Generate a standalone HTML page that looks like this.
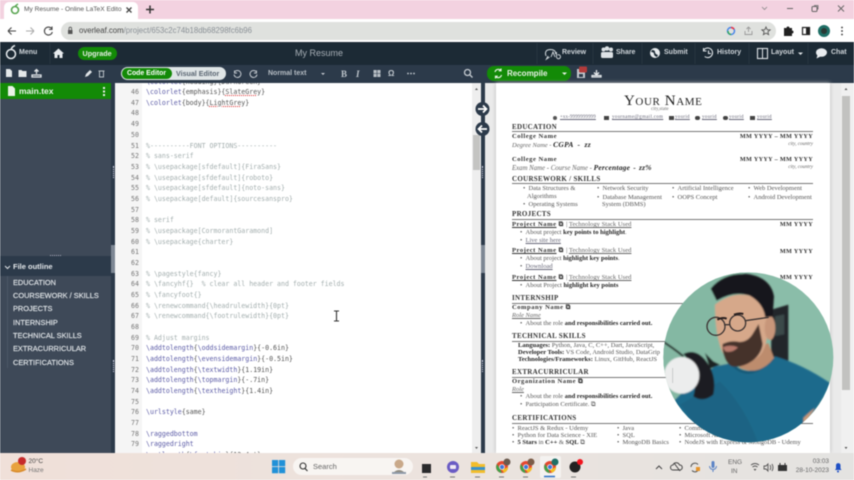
<!DOCTYPE html>
<html><head><meta charset="utf-8"><title>My Resume - Online LaTeX Editor</title>
<style>
html,body{margin:0;padding:0;width:854px;height:480px;overflow:hidden;background:#fff}
#r{position:relative;width:854px;height:480px;overflow:hidden;font-family:"Liberation Sans",sans-serif;filter:blur(.4px)}
.b{position:absolute}
.t{position:absolute;line-height:0;white-space:nowrap}
.h{color:#cfd5da;font-weight:bold;font-size:7px}
.n{position:absolute;left:115px;width:24px;text-align:right;line-height:0;font:6.6px/0 "DejaVu Sans Mono","Liberation Mono",monospace;color:#777}
.c{position:absolute;left:146px;line-height:0;white-space:pre;font:6.6px/0 "DejaVu Sans Mono","Liberation Mono",monospace;color:#555}
.g{color:#a3aeae}.p{color:#5a5aa6}.u{text-decoration:underline dotted #d33}
.o{position:absolute;left:13px;line-height:0;font-size:7.4px;color:#e3e7ea;white-space:nowrap;-webkit-text-stroke:.15px #e3e7ea}
.s{position:absolute;line-height:0;white-space:nowrap;font-family:"Liberation Serif",serif;font-size:6.5px;color:#555}
.k{font-weight:bold;color:#222}
.sec{position:absolute;left:512px;line-height:0;white-space:nowrap;font:bold 7px/0 "Liberation Serif",serif;color:#333;letter-spacing:.3px}
.rl{position:absolute;left:512px;width:301px;height:1px;background:#777}
.nm{position:absolute;left:512px;line-height:0;white-space:nowrap;font:bold 6.6px/0 "Liberation Serif",serif;color:#333;letter-spacing:.5px}
.dt{position:absolute;right:41px;line-height:0;white-space:nowrap;font:bold 6.2px/0 "Liberation Serif",serif;color:#333;letter-spacing:.32px}
.ct{position:absolute;right:41px;line-height:0;white-space:nowrap;font:italic 5px/0 "Liberation Serif",serif;color:#666}
.i{font-style:italic;color:#666}
.ul{text-decoration:underline;color:#667}
.q{position:absolute;top:118px;line-height:0;white-space:nowrap;font:5px/0 "Liberation Serif",serif;color:#667;text-decoration:underline}
.w{position:absolute;top:116px;width:5px;height:4px;background:#444}
.tx{font-weight:normal;color:#666;letter-spacing:0}
</style></head><body><div id="r">

<!-- browser chrome -->
<div class="b" style="left:0;top:0;width:854px;height:19px;background:#f3d2e0"></div>
<div class="b" style="left:4px;top:2px;width:134px;height:17px;background:#fff;border-radius:5px 5px 0 0"></div>
<div class="b" style="left:0;top:19px;width:854px;height:23px;background:#fff"></div>
<div class="b" style="left:61px;top:22px;width:715px;height:18px;background:#dfe1de;border-radius:9px"></div>
<div class="t" style="left:24px;top:9.5px;font-size:6.6px;color:#555">My Resume - Online LaTeX Edito</div>
<div class="t" style="left:79px;top:31px;font-size:7.8px;color:#8a9096"><span style="color:#444">overleaf.com</span>/project/653c2c74b18db68298fc6b96</div>
<svg class="b" style="left:0;top:0" width="854" height="42" viewBox="0 0 854 42" fill="none">
<circle cx="15" cy="10" r="3.500" stroke="#5aa552" stroke-width="1.600"/><path d="M15 7q1-2 3-3" stroke="#5aa552" stroke-width="1.400"/>
<path d="M126.500 7.500l5 5m0-5l-5 5" stroke="#444" stroke-width="1.300"/>
<path d="M146 9.500h8M150 5.500v8" stroke="#333" stroke-width="1.500"/>
<path d="M8 31h8M8 31l3.500-3.500M8 31l3.500 3.500" stroke="#444" stroke-width="1.100"/>
<path d="M26 31h8M34 31l-3.500-3.500M34 31l-3.500 3.500" stroke="#aaa" stroke-width="1"/>
<path d="M51.500 28.500a4 4 0 1 0 .8 3.500M52 26.500v3h-3" stroke="#444" stroke-width="1.100"/>
<rect x="68" y="30" width="4.500" height="4" fill="#555"/><path d="M69 30v-1.500a1.300 1.300 0 0 1 2.600 0V30" stroke="#555" stroke-width=".8"/>
<circle cx="731" cy="31" r="3.500" stroke="#4a86e8" stroke-width="1.500"/><path d="M731 27.500a3.500 3.500 0 0 1 3 1.700" stroke="#e34" stroke-width="1.500"/><path d="M728 31a3.500 3.500 0 0 0 3 3.500" stroke="#3a5" stroke-width="1.500"/>
<path d="M745 31v3.500h7V31M748.500 32v-5M746.500 29l2-2 2 2" stroke="#999" stroke-width=".9"/>
<path d="M766 27l1.200 2.700 2.900.2-2.200 1.900.7 2.800-2.600-1.500-2.600 1.500.7-2.800-2.200-1.900 2.900-.2z" stroke="#555" stroke-width=".9"/>
<path d="M784 28h2.500a1.500 1.500 0 0 1 3 0h2.500v2.500a1.500 1.500 0 0 1 0 3V36h-8z" fill="#222"/>
<rect x="802.500" y="27.500" width="7" height="7" stroke="#222" stroke-width="1.200"/><rect x="806" y="27.500" width="3.500" height="7" fill="#222"/>
<circle cx="824" cy="31" r="6" fill="#1f6f66"/><circle cx="824" cy="31" r="3" fill="#2b3a35"/>
<circle cx="842" cy="27.500" r=".9" fill="#333"/><circle cx="842" cy="31" r=".9" fill="#333"/><circle cx="842" cy="34.500" r=".9" fill="#333"/>
<path d="M762 7l2.500 2.500L767 7" stroke="#888" stroke-width=".8"/>
<path d="M787 8.500h6" stroke="#666" stroke-width="1"/>
<rect x="812" y="6.500" width="5" height="5" rx="1" stroke="#666"/><path d="M814 5.500h4v4" stroke="#666" stroke-width=".8"/>
<path d="M838 5.500l6 6m0-6l-6 6" stroke="#666" stroke-width=".9"/>
</svg>

<!-- overleaf header -->
<div class="b" style="left:0;top:42px;width:854px;height:23px;background:#1c2a35"></div>
<div class="b" style="left:0;top:65px;width:854px;height:18px;background:#2c3a4a"></div>
<div class="t h" style="left:19px;top:53px">Menu</div>
<div class="b" style="left:78px;top:47px;width:39px;height:13px;border-radius:7px;background:#138a07"></div>
<div class="t" style="left:82.500px;top:53.500px;font-size:7.200px;font-weight:bold;color:#e6efe4">Upgrade</div>
<div class="t" style="left:295px;top:53px;font-size:9px;color:#a6aeb5">My Resume</div>
<div class="t h" style="left:562px;top:53px">Review</div>
<div class="t h" style="left:616px;top:53px">Share</div>
<div class="t h" style="left:664px;top:53px">Submit</div>
<div class="t h" style="left:717px;top:53px">History</div>
<div class="t h" style="left:771px;top:53px">Layout</div>
<div class="t h" style="left:831px;top:53px">Chat</div>
<svg class="b" style="left:0;top:42px" width="854" height="41" viewBox="0 42 854 41" fill="none">
<circle cx="11" cy="54" r="4.500" stroke="#e8ecef" stroke-width="1.500"/><path d="M11 49.500q1-3 4-4" stroke="#e8ecef" stroke-width="1.500"/>
<path d="M53 53.500l5.500-5 5.500 5h-1.500V58h-3v-3h-2v3h-3v-4.500z" fill="#e8ecef"/>
<path d="M546 56q-2-6 4-6.500 6 0 5.500 4.500M548 56l-1.500 3 3-2" stroke="#d6dce0"/><path d="M551 57l2-5 2 5M556.500 52v5a2 2 0 1 0 1-2" stroke="#d6dce0" stroke-width=".9"/>
<circle cx="603.500" cy="49.500" r="2" fill="#dde2e6"/><circle cx="607" cy="48.500" r="2.300" fill="#dde2e6"/><circle cx="611" cy="49.500" r="2" fill="#dde2e6"/><rect x="601" y="52" width="12" height="6" rx="1.500" fill="#dde2e6"/>
<circle cx="655" cy="53" r="5" fill="#e6eaed"/><path d="M652 50q3 0 3 2t3 3l-1 2q-3-1-3-3t-3-2z" fill="#1c2a35"/>
<path d="M703.500 50.500a4.800 4.800 0 1 1 1.200 6M703.500 48v3h3M708.500 50.500v3h2.500" stroke="#dde2e6" stroke-width="1.100"/>
<rect x="757.500" y="48.500" width="10" height="10" stroke="#dde2e6" stroke-width="1.100"/><path d="M762.500 48.500v10" stroke="#dde2e6"/>
<path d="M798 52.500h5l-2.500 2.500z" fill="#dde2e6"/>
<ellipse cx="821.500" cy="52.500" rx="5.500" ry="4.300" fill="#e8ecef"/><path d="M817.500 55l-1 3.500 4-2z" fill="#e8ecef"/>
<path d="M537 43v21M593 43v21M642 43v21M695 43v21M749 43v21M808 43v21M50 43v21" stroke="#273540"/>
<!-- toolbar -->
<path d="M6 69h4l2 2v6H6z" fill="#e4e8ea"/><path d="M18.500 70h3l1 1h4v6h-8z" fill="#e4e8ea"/><path d="M32 77h9v-2h-9zM36.500 74v-4M34.500 71.500l2-2 2 2" stroke="#e4e8ea" stroke-width="1.300"/>
<path d="M85 77l1-3 4-4 2 2-4 4z" fill="#dfe3e6"/><path d="M98.500 71h6M99.500 71.500v5.500h4v-5.500" stroke="#b9c0c6" stroke-width="1"/>
<path d="M235 71.500a3.500 3.500 0 1 1-1 3M234.500 70.500v2.500h2.500" stroke="#c4cad0" stroke-width="1"/>
<path d="M256 71.500a3.500 3.500 0 1 0 1 3M256.500 70.500v2.500H254" stroke="#c4cad0" stroke-width="1"/>
<path d="M321 73h4l-2 2z" fill="#c4cad0"/>
<rect x="373.500" y="70" width="7" height="7" fill="#b9c0c6"/><path d="M373.500 73.500h7M377 70v7" stroke="#2c3a4a" stroke-width=".6"/>
<circle cx="411" cy="73.500" r=".9" fill="#c4cad0"/><circle cx="408" cy="73.500" r=".9" fill="#c4cad0"/><circle cx="414" cy="73.500" r=".9" fill="#c4cad0"/>
<circle cx="467.500" cy="72.500" r="3" stroke="#c4cad0" stroke-width="1.300"/><path d="M470 75l2.500 2.500" stroke="#c4cad0" stroke-width="1.300"/>
</svg>
<div class="t" style="left:341px;top:73.500px;font:bold 9px/0 'Liberation Serif',serif;color:#bfc6cc">B</div>
<div class="t" style="left:356px;top:73.500px;font:italic bold 9px/0 'Liberation Serif',serif;color:#bfc6cc">I</div>
<div class="t" style="left:388px;top:73.500px;font-size:8px;color:#bfc6cc;font-weight:bold">Ω</div>
<div class="t" style="left:268px;top:73.500px;font-size:7px;font-weight:bold;color:#b6bdc4">Normal text</div>
<div class="b" style="left:121px;top:67px;width:105px;height:13px;border-radius:7px;background:#dfe5e6"></div>
<div class="b" style="left:122px;top:68px;width:50px;height:11px;border-radius:6px;background:#138a07"></div>
<div class="t" style="left:127px;top:73.500px;font-size:6.900px;font-weight:bold;color:#fff">Code Editor</div>
<div class="t" style="left:176px;top:73.500px;font-size:7.100px;font-weight:bold;color:#5a6672">Visual Editor</div>
<div class="b" style="left:487px;top:66px;width:84px;height:15px;border-radius:7px;background:#138a07"></div>
<div class="t" style="left:507px;top:73.500px;font-size:8px;font-weight:bold;color:#e8f2e6">Recompile</div>
<svg class="b" style="left:487px;top:65px" width="125" height="18" viewBox="487 65 125 18" fill="none">
<path d="M495 72a3.500 3.500 0 0 1 6-1.500M501.500 75a3.500 3.500 0 0 1-6 1.500M501 68.500v2.300h-2.300M495.500 78.500v-2.300h2.300" stroke="#e8f2e6" stroke-width="1.200"/>
<path d="M562 72.500h5l-2.500 2.500z" fill="#e8f2e6"/>
<rect x="577" y="69" width="8" height="9" fill="#c2c8ce"/><rect x="579" y="74" width="4" height="3" fill="#2c3a4a"/><rect x="579" y="66.500" width="8" height="6" rx="1" fill="#b23b3b"/>
<path d="M592 77h9v-1.500h-9zM596.500 75v-5M594 72.500l2.500 2.500 2.500-2.500" stroke="#e4e8ea" stroke-width="1.300"/>
</svg>

<!-- sidebar -->
<div class="b" style="left:0;top:83px;width:111px;height:370px;background:#3e4958"></div>
<div class="b" style="left:0;top:83px;width:111px;height:16px;background:#138a07"></div>
<svg class="b" style="left:7px;top:85px" width="9" height="12" viewBox="0 0 9 12"><path d="M1 1h4.500L8 3.500V11H1z" fill="#e8f2e6"/></svg>
<div class="t" style="left:19px;top:91px;font-size:8.500px;font-weight:bold;color:#eef4ec">main.tex</div>
<div class="b" style="left:103px;top:87px;width:2px;height:2px;background:#eee;box-shadow:0 3.500px #eee,0 7px #eee"></div>
<div class="b" style="left:0;top:256px;width:111px;height:20px;background:#2c3a4a"></div>
<div class="t" style="left:13px;top:267px;font-size:7.500px;font-weight:bold;color:#e3e7ea">File outline</div>
<svg class="b" style="left:4px;top:265px" width="7" height="5"><path d="M1 1l2.500 2.500L6 1" stroke="#dde2e6" fill="none"/></svg>
<div class="b" style="left:50px;top:255px;width:11px;height:1px;border-top:1px dotted #aab"></div>
<div class="b" style="left:7px;top:276px;width:1px;height:92px;background:#4b5666"></div>
<div class="o" style="top:282.500px">EDUCATION</div>
<div class="o" style="top:296px">COURSEWORK / SKILLS</div>
<div class="o" style="top:309px">PROJECTS</div>
<div class="o" style="top:322.500px">INTERNSHIP</div>
<div class="o" style="top:336px">TECHNICAL SKILLS</div>
<div class="o" style="top:349px">EXTRACURRICULAR</div>
<div class="o" style="top:362.500px">CERTIFICATIONS</div>
<div class="b" style="left:111px;top:83px;width:4px;height:370px;background:#2c3a4a"></div>
<div class="b" style="left:111px;top:245px;width:4px;height:28px;background:#7d8794"></div>
<div class="b" style="left:112.500px;top:166px;width:1px;height:12px;border-left:1px dotted #dde"></div>
<div class="b" style="left:112.500px;top:360px;width:1px;height:12px;border-left:1px dotted #dde"></div>

<!-- editor -->
<div class="b" style="left:115px;top:83px;width:357px;height:370px;background:#fff;overflow:hidden"></div>
<div class="b" style="left:115px;top:83px;width:27px;height:370px;background:#f5f5f5"></div>
<div class="b" style="left:142px;top:83px;width:330px;height:370px;overflow:hidden">
<div class="c" style="left:4px;top:-1.500px"><span class="p">\colorlet</span>{heading}{DarkGreen}</div>
<div class="c" style="left:4px;top:371.500px"><span class="p">\setlength</span>{<span class="p">\footskip</span>}{13.4pt}</div>
</div>
<div class="n" style="top:92px">46</div><div class="c" style="top:92px"><span class="p">\colorlet</span>{emphasis}{<span class="u">SlateGrey</span>}</div>
<div class="n" style="top:103px">47</div><div class="c" style="top:103px"><span class="p">\colorlet</span>{body}{<span class="u">LightGrey</span>}</div>
<div class="n" style="top:113px">48</div>
<div class="n" style="top:124px">49</div>
<div class="n" style="top:135px">50</div>
<div class="n" style="top:145.500px">51</div><div class="c g" style="top:145.500px">%----------FONT OPTIONS----------</div>
<div class="n" style="top:156px">52</div><div class="c g" style="top:156px">% sans-serif</div>
<div class="n" style="top:167px">53</div><div class="c g" style="top:167px">% \usepackage[sfdefault]{FiraSans}</div>
<div class="n" style="top:177.500px">54</div><div class="c g" style="top:177.500px">% \usepackage[sfdefault]{roboto}</div>
<div class="n" style="top:188px">55</div><div class="c g" style="top:188px">% \usepackage[sfdefault]{noto-sans}</div>
<div class="n" style="top:199px">56</div><div class="c g" style="top:199px">% \usepackage[default]{sourcesanspro}</div>
<div class="n" style="top:209.500px">57</div>
<div class="n" style="top:220px">58</div><div class="c g" style="top:220px">% serif</div>
<div class="n" style="top:231px">59</div><div class="c g" style="top:231px">% \usepackage[CormorantGaramond]</div>
<div class="n" style="top:241.500px">60</div><div class="c g" style="top:241.500px">% \usepackage{charter}</div>
<div class="n" style="top:252px">61</div>
<div class="n" style="top:263px">62</div>
<div class="n" style="top:273.500px">63</div><div class="c g" style="top:273.500px">% \pagestyle{fancy}</div>
<div class="n" style="top:284px">64</div><div class="c g" style="top:284px">% \fancyhf{}  % clear all header and footer fields</div>
<div class="n" style="top:295px">65</div><div class="c g" style="top:295px">% \fancyfoot{}</div>
<div class="n" style="top:305.500px">66</div><div class="c g" style="top:305.500px">% \renewcommand{\headrulewidth}{0pt}</div>
<div class="n" style="top:316px">67</div><div class="c g" style="top:316px">% \renewcommand{\footrulewidth}{0pt}</div>
<div class="n" style="top:327px">68</div>
<div class="n" style="top:337.500px">69</div><div class="c g" style="top:337.500px">% Adjust margins</div>
<div class="n" style="top:348px">70</div><div class="c" style="top:348px"><span class="p">\addtolength</span>{<span class="p">\oddsidemargin</span>}{-0.6in}</div>
<div class="n" style="top:359px">71</div><div class="c" style="top:359px"><span class="p">\addtolength</span>{<span class="p">\evensidemargin</span>}{-0.5in}</div>
<div class="n" style="top:369.500px">72</div><div class="c" style="top:369.500px"><span class="p">\addtolength</span>{<span class="p">\textwidth</span>}{1.19in}</div>
<div class="n" style="top:380px">73</div><div class="c" style="top:380px"><span class="p">\addtolength</span>{<span class="p">\topmargin</span>}{-.7in}</div>
<div class="n" style="top:391px">74</div><div class="c" style="top:391px"><span class="p">\addtolength</span>{<span class="p">\textheight</span>}{1.4in}</div>
<div class="n" style="top:401.500px">75</div>
<div class="n" style="top:412px">76</div><div class="c" style="top:412px"><span class="p">\urlstyle</span>{same}</div>
<div class="n" style="top:423px">77</div>
<div class="n" style="top:433.500px">78</div><div class="c p" style="top:433.500px">\raggedbottom</div>
<div class="n" style="top:444px">79</div><div class="c p" style="top:444px">\raggedright</div>
<svg class="b" style="left:332px;top:310px" width="9" height="12"><path d="M2 1h5M2 11h5M4.500 1v10" stroke="#333" stroke-width="1.100" fill="none"/></svg>

<!-- editor scrollbar / splitter -->
<div class="b" style="left:472px;top:83px;width:9px;height:370px;background:#eee"></div>
<div class="b" style="left:473px;top:135px;width:7px;height:35px;background:#c4c4c2"></div>
<div class="b" style="left:481px;top:83px;width:4px;height:370px;background:#2c3a4a"></div>
<div class="b" style="left:481px;top:245px;width:4px;height:28px;background:#7d8794"></div>
<div class="b" style="left:482px;top:166px;width:1px;height:12px;border-left:1px dotted #dde"></div>
<div class="b" style="left:482px;top:360px;width:1px;height:12px;border-left:1px dotted #dde"></div>

<!-- pdf viewer -->
<div class="b" style="left:485px;top:83px;width:369px;height:370px;background:#eaeaea"></div>
<div class="b" style="left:496px;top:83px;width:334px;height:370px;background:#fff;box-shadow:0 0 4px #bbb"></div>
<div class="b" style="left:841px;top:83px;width:13px;height:370px;background:#f0f0f0"></div>
<div class="b" style="left:842px;top:96px;width:8px;height:294px;background:#c2c2c0"></div>
<svg class="b" style="left:472px;top:83px" width="382" height="370" viewBox="472 83 382 370">
<path d="M475 90l1.500-2 1.500 2zM475 447l1.500 2 1.500-2zM844.500 90l1.500-2 1.500 2zM844.500 447l1.500 2 1.500-2z" fill="#555"/>
<circle cx="482.500" cy="109" r="7" fill="#2c3a4a"/><path d="M478 109h8M483 105.500l3.500 3.500-3.500 3.500" stroke="#fff" stroke-width="1.700" fill="none"/>
<circle cx="482.500" cy="129" r="7" fill="#2c3a4a"/><path d="M487 129h-8M482 125.500l-3.500 3.500 3.500 3.500" stroke="#fff" stroke-width="1.700" fill="none"/>
</svg>

<!-- resume -->
<div class="t" style="left:624px;top:100.500px;font:15px/0 'Liberation Serif',serif;font-variant:small-caps;color:#222;letter-spacing:.6px">Your Name</div>
<div class="s" style="left:651px;top:110px;font-size:5px;color:#777">city,state</div>
<div class="w" style="left:553px;background:#555;width:4px;border-radius:2px"></div><div class="q" style="left:560px;letter-spacing:.1px">+xx-9999999999</div>
<div class="w" style="left:604px"></div><div class="q" style="left:612px;letter-spacing:.3px">yourname@gmail.com</div>
<div class="w" style="left:669px"></div><div class="q" style="left:675px;letter-spacing:.3px">yourid</div>
<div class="w" style="left:695px;border-radius:2px"></div><div class="q" style="left:702px;letter-spacing:.3px">yourid</div>
<div class="w" style="left:723px;border-radius:2px"></div><div class="q" style="left:729px;letter-spacing:.3px">yourid</div>
<div class="w" style="left:750px"></div><div class="q" style="left:757px;letter-spacing:.3px">yourid</div>

<div class="sec" style="top:127px">EDUCATION</div><div class="rl" style="top:131px"></div>
<div class="nm" style="top:137px">College Name</div><div class="dt" style="top:137px">MM YYYY – MM YYYY</div>
<div class="s" style="left:512px;top:144.500px"><span class="i">Degree Name - </span><b style="font-style:italic;color:#222;font-size:7.500px;word-spacing:2px;letter-spacing:.3px">CGPA - zz</b></div><div class="ct" style="top:145px">city, country</div>
<div class="nm" style="top:160px">College Name</div><div class="dt" style="top:160px">MM YYYY – MM YYYY</div>
<div class="s" style="left:512px;top:168px;font-size:6.800px"><span class="i">Exam Name - Course Name - </span><b style="font-style:italic;color:#222;font-size:7.500px;word-spacing:1px;letter-spacing:.2px">Percentage - zz%</b></div><div class="ct" style="top:168px">city, country</div>

<div class="sec" style="top:179px">COURSEWORK / SKILLS</div><div class="rl" style="top:183px"></div>
<div class="s" style="left:523px;top:189px">• &nbsp;Data Structures &amp;</div>
<div class="s" style="left:527px;top:196.500px">Algorithms</div>
<div class="s" style="left:523px;top:205px">• &nbsp;Operating Systems</div>
<div class="s" style="left:597px;top:189px">• &nbsp;Network Security</div>
<div class="s" style="left:597px;top:198px">• &nbsp;Database Management</div>
<div class="s" style="left:602px;top:205px">System (DBMS)</div>
<div class="s" style="left:672px;top:189px">• &nbsp;Artificial Intelligence</div>
<div class="s" style="left:672px;top:198px">• &nbsp;OOPS Concept</div>
<div class="s" style="left:748px;top:189px">• &nbsp;Web Development</div>
<div class="s" style="left:748px;top:198px">• &nbsp;Android Development</div>

<div class="sec" style="top:214px">PROJECTS</div><div class="rl" style="top:218.500px"></div>
<div class="nm" style="top:225px"><u>Project Name</u> ⧉ <span class="tx">| <u>Technology Stack Used</u></span></div><div class="dt" style="top:225px">MM YYYY</div>
<div class="s" style="left:520px;top:233px">• &nbsp;About project <span class="k">key points to highlight</span>.</div>
<div class="s" style="left:520px;top:241px">• &nbsp;<span class="ul">Live site here</span></div>
<div class="nm" style="top:251px"><u>Project Name</u> ⧉ <span class="tx">| <u>Technology Stack Used</u></span></div><div class="dt" style="top:251.500px">MM YYYY</div>
<div class="s" style="left:520px;top:259px">• &nbsp;About project <span class="k">highlight key points</span>.</div>
<div class="s" style="left:520px;top:267px">• &nbsp;<span class="ul">Download</span></div>
<div class="nm" style="top:278px"><u>Project Name</u> ⧉ <span class="tx">| <u>Technology Stack Used</u></span></div><div class="dt" style="top:278px">MM YYYY</div>
<div class="s" style="left:520px;top:286px">• &nbsp;About Project <span class="k">highlight key points</span></div>

<div class="sec" style="top:298px">INTERNSHIP</div><div class="rl" style="top:302.500px"></div>
<div class="nm" style="top:308px">Company Name ⧉</div>
<div class="s" style="left:512px;top:316px"><u class="i">Role Name</u></div>
<div class="s" style="left:520px;top:323.500px">• &nbsp;About the role <span class="k">and responsibilities carried out.</span></div>

<div class="sec" style="top:336px">TECHNICAL SKILLS</div><div class="rl" style="top:340.500px"></div>
<div class="s" style="left:518px;top:346px"><span class="k">Languages:</span> Python, Java, C, C++, Dart, JavaScript,</div>
<div class="s" style="left:518px;top:353px"><span class="k">Developer Tools:</span> VS Code, Android Studio, DataGrip</div>
<div class="s" style="left:518px;top:359.500px"><span class="k">Technologies/Frameworks:</span> Linux, GitHub, ReactJS</div>

<div class="sec" style="top:372px">EXTRACURRICULAR</div><div class="rl" style="top:376.500px"></div>
<div class="nm" style="top:382px">Organization Name ⧉</div>
<div class="s" style="left:512px;top:389.500px"><u class="i">Role</u></div>
<div class="s" style="left:520px;top:397px">• &nbsp;About the role <span class="k">and responsibilities carried out.</span></div>
<div class="s" style="left:520px;top:405px">• &nbsp;Participation Certificate. ⧉</div>

<div class="sec" style="top:418px">CERTIFICATIONS</div><div class="rl" style="top:422.500px"></div>
<div class="s" style="left:512px;top:428.500px">• &nbsp;ReactJS &amp; Redux - Udemy</div>
<div class="s" style="left:512px;top:436px">• &nbsp;Python for Data Science - XIE</div>
<div class="s" style="left:512px;top:443px">• &nbsp;<span class="k">5 Stars</span> in <span class="k">C++</span> &amp; <span class="k">SQL</span> ⧉</div>
<div class="s" style="left:617px;top:428.500px">• &nbsp;Java</div>
<div class="s" style="left:617px;top:436px">• &nbsp;SQL</div>
<div class="s" style="left:617px;top:443px">• &nbsp;MongoDB Basics</div>
<div class="s" style="left:679px;top:428.500px">• &nbsp;Communication</div>
<div class="s" style="left:679px;top:436px">• &nbsp;Microsoft Azure</div>
<div class="s" style="left:679px;top:443px">• &nbsp;NodeJS with Express &amp; MongoDB - Udemy</div>

<!-- webcam -->
<svg class="b" style="left:660px;top:268px" width="180" height="180" viewBox="0 0 540 540">
<defs><clipPath id="cc"><circle cx="265" cy="268" r="255"/></clipPath><filter id="bl"><feGaussianBlur stdDeviation="2.500"/></filter></defs>
<g clip-path="url(#cc)">
<rect width="540" height="540" fill="#8abda9"/>
<g filter="url(#bl)">
<path d="M0 0h250v540H0z" fill="#84b8a3"/>
<path d="M335 125l50-15v170l-52-10z" fill="#22282a"/>
<path d="M345 145l28-6v60l-28 5z" fill="#3a494a"/>
<path d="M135 255l25 25 20 10-30 12z" fill="#1d2224"/>
<!-- shirt -->
<path d="M40 400Q100 340 165 295L215 285Q260 330 300 300L345 265Q430 290 510 345Q490 400 445 450L400 540H120Q90 470 40 400z" fill="#1f6b8c"/>
<path d="M215 287Q265 345 340 272" stroke="#185a78" stroke-width="9" fill="none"/>
<path d="M180 340Q260 420 300 540H120Q100 450 60 410z" fill="#1c6484"/>
<path d="M430 450q20-20 35-30l-20 30-15 20z" fill="#c99a7a"/>
<!-- neck -->
<path d="M225 270L325 225L342 270Q300 325 240 300z" fill="#bd8c6d"/>
<!-- head -->
<path d="M165 110Q235 55 310 100L322 150Q328 230 300 262Q260 298 215 287Q190 265 182 240Q165 190 165 110z" fill="#d6a88a"/>
<ellipse cx="330" cy="180" rx="16" ry="36" fill="#c7967a"/>
<!-- beard -->
<path d="M192 262q-6-18-4-34 25-12 50-6 25 0 40-24l18-30 12 60q-4 30-30 50-35 24-65 16-15-10-21-32z" fill="#453029"/>
<path d="M188 238q22-10 46 0-18 18-38 12z" fill="#b87a6c"/>
<!-- hair -->
<path d="M152 62Q190 14 262 18 332 28 342 85L338 145 316 148Q310 105 268 82 220 68 170 98z" fill="#17151a"/>
<!-- mic -->
<path d="M0 215Q40 240 70 265" stroke="#1a1a1c" stroke-width="6" fill="none"/>
<path d="M70 258Q105 240 135 275Q172 320 160 380Q130 405 100 385Q120 310 70 258z" fill="#1d1d20"/>
<ellipse cx="65" cy="322" rx="53" ry="55" fill="#eceded"/>
</g>
<path d="M38 300v45" stroke="#bbb" stroke-width="2"/>
<!-- glasses -->
<g fill="none" stroke="#3d3534" stroke-width="4"><circle cx="168" cy="175" r="27"/><circle cx="233" cy="165" r="24"/><path d="M192 170h18M256 158l70-10"/></g>
<path d="M172 155q15-8 28-3M222 140q15-6 28-2" stroke="#2a2020" stroke-width="6" fill="none"/>
</g>
</svg>

<!-- taskbar -->
<div class="b" style="left:0;top:453px;width:854px;height:27px;background:linear-gradient(90deg,#f0e0d9,#ece3de 50%,#e4e3e1)"></div>
<div class="t" style="left:28.500px;top:462px;font-size:6.500px;color:#444">20°C</div>
<div class="t" style="left:28.500px;top:471px;font-size:6.500px;color:#777">Haze</div>
<div class="b" style="left:293px;top:458px;width:120px;height:17px;border-radius:9px;background:#f8f5f2"></div>
<div class="t" style="left:313px;top:467px;font-size:7.500px;color:#666">Search</div>
<div class="t" style="left:728px;top:462.500px;font-size:6.500px;color:#666">ENG</div>
<div class="t" style="left:731px;top:471.500px;font-size:6.500px;color:#666">IN</div>
<div class="t" style="right:25px;top:462px;font-size:6.500px;color:#666">03:03</div>
<div class="t" style="right:25px;top:471px;font-size:6.500px;color:#666">28-10-2023</div>
<svg class="b" style="left:0;top:453px" width="854" height="27" viewBox="0 453 854 27" fill="none">
<ellipse cx="18" cy="467" rx="7" ry="5" fill="#e8a23e"/><path d="M11 470q7 4 15-1" stroke="#d88a2a" stroke-width="1.500"/>
<circle cx="22" cy="461" r="4" fill="#c62a2a"/>
<path d="M272 460h6.200v6.200H272zM279 460h6.200v6.200H279zM272 467h6.200v6.200H272zM279 467h6.200v6.200H279z" fill="#2191d8"/>
<circle cx="303" cy="466" r="3" stroke="#333" stroke-width="1.100"/><path d="M305 468.500l2.500 2.500" stroke="#333" stroke-width="1.200"/>
<circle cx="399" cy="464" r="4.500" fill="#c9a98a"/><path d="M392 474q7-8 14 0z" fill="#8f8a7e"/><rect x="392" y="472" width="14" height="2" fill="#8f9aa8"/>
<rect x="422" y="464" width="9" height="9" fill="#2a2a2c"/>
<circle cx="453" cy="467" r="6" fill="#6a5bc4"/><rect x="450" y="465" width="6" height="4" rx="1" fill="#efe8f4"/>
<path d="M471 462h6l2 2h6v9h-14z" fill="#f2bd2c"/><rect x="471" y="467" width="14" height="3" fill="#3792cf"/>
<rect x="540" y="456" width="21" height="22" rx="2" fill="#f4f2f0"/>
<g><circle cx="502" cy="467" r="6" fill="#e5482f"/><path d="M502 473a6 6 0 0 1-5-9l3 5z" fill="#3da34a"/><path d="M508 467a6 6 0 0 1-4 5.700L502 470z" fill="#f2c01e"/><circle cx="502" cy="467" r="2.800" fill="#fff"/><circle cx="502" cy="467" r="2.100" fill="#3d78d8"/><circle cx="507" cy="462" r="3.500" fill="#6a5a4e"/></g>
<g><circle cx="526" cy="467" r="6" fill="#e5482f"/><path d="M526 473a6 6 0 0 1-5-9l3 5z" fill="#3da34a"/><path d="M532 467a6 6 0 0 1-4 5.700L526 470z" fill="#f2c01e"/><circle cx="526" cy="467" r="2.800" fill="#fff"/><circle cx="526" cy="467" r="2.100" fill="#3d78d8"/><circle cx="531" cy="462" r="3.500" fill="#7b5c48"/></g>
<g><circle cx="550" cy="467" r="6" fill="#e5482f"/><path d="M550 473a6 6 0 0 1-5-9l3 5z" fill="#3da34a"/><path d="M556 467a6 6 0 0 1-4 5.700L550 470z" fill="#f2c01e"/><circle cx="550" cy="467" r="2.800" fill="#fff"/><circle cx="550" cy="467" r="2.100" fill="#3d78d8"/><circle cx="555" cy="462" r="3.500" fill="#1f6f66"/></g>
<circle cx="575" cy="467" r="5.500" fill="#222"/><circle cx="580" cy="462" r="3" fill="#f0141e"/>
<path d="M475 477h5M499 477h5M523 477h5M571 477h5M423 477h4M450 477h5" stroke="#777" stroke-width="1"/>
<path d="M544 476.500h11" stroke="#2a70c8" stroke-width="1.500"/>
<path d="M656 469l3-3 3 3" stroke="#444" stroke-width="1"/>
<path d="M673 470a2.500 2.500 0 0 1 0-5 3.500 3.500 0 0 1 6.500 0 2.500 2.500 0 0 1 .5 5zM674 463l6 8" stroke="#444" stroke-width="1"/>
<path d="M691 467a4 4 0 0 1 7-2.500M699 468a4 4 0 0 1-7 2.500" stroke="#555" stroke-width="1"/><rect x="696" y="467" width="4" height="4" fill="#e6932a"/>
<rect x="711.500" y="461" width="3" height="7" rx="1.500" fill="#5c84c6"/><path d="M709.500 466a3.500 3.500 0 0 0 7 0M713 470v2" stroke="#5c84c6"/>
<path d="M751 465q4-3 8 0M752.500 467q2.500-2 5 0M754 469l1 1 1-1" stroke="#555" stroke-width="1"/>
<path d="M764 466h2l2-2v7l-2-2h-2zM770 465q1.500 2.500 0 5M772 464q2 3.500 0 7" stroke="#555" stroke-width=".9"/>
<rect x="778" y="465" width="9" height="6" fill="#333"/><path d="M780 465v-2M785 465v-2" stroke="#333"/>
<path d="M835 470h6.500l-1-1.500V465a2.300 2.300 0 0 0-4.500 0v3.500z" fill="#1e4fc4"/><circle cx="838" cy="471.500" r="1" fill="#1e4fc4"/>
</svg>

</div></body></html>
